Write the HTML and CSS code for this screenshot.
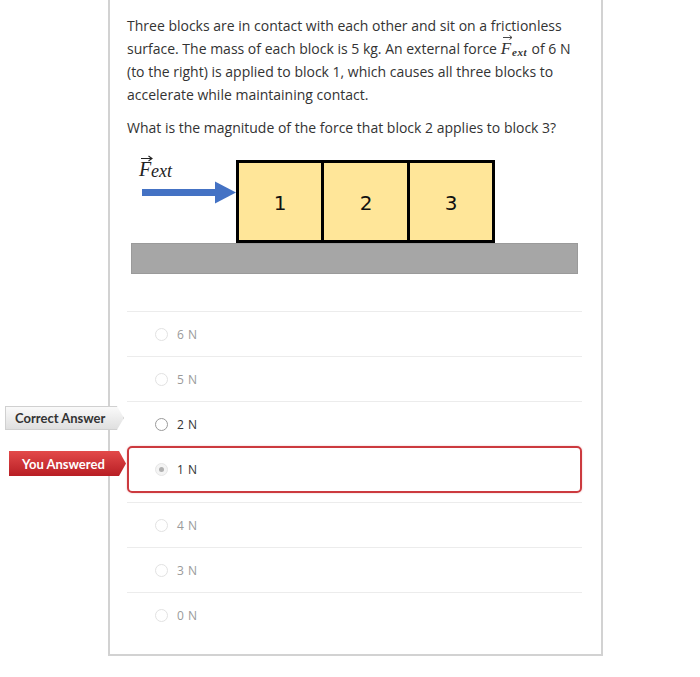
FILE: index.html
```html
<!DOCTYPE html>
<html>
<head>
<meta charset="utf-8">
<link rel="stylesheet" href="styles.css">
</head>
<body>
<div class="card">
  <p class="stem">Three blocks are in contact with each other and sit on a frictionless surface. The mass of each block is 5 kg. An external force <span class="vec"><span class="vf">F<svg class="varrow" width="10" height="5" viewBox="0 0 10 5"><path d="M0 2.5H8.5M6.5 0.5L9 2.5L6.5 4.5" stroke="#333" stroke-width="0.9" fill="none"/></svg></span><sub class="vsub">ext</sub></span> of 6 N (to the right) is applied to block 1, which causes all three blocks to accelerate while maintaining contact.</p>
  <p class="ask">What is the magnitude of the force that block 2 applies to block 3?</p>
  <svg class="diagram" width="452" height="128" viewBox="0 0 452 128">
    <text x="10" y="27" class="fl">F</text>
    <text x="22" y="28" class="fl sub">ext</text>
    <path d="M12 9.5H22M19.5 7L23 9.5L19.5 12" stroke="#222" stroke-width="1.1" fill="none"/>
    <rect x="13" y="40" width="75" height="7" fill="#4472c4"/>
    <polygon points="86,32.5 107,43.5 86,54.5" fill="#4472c4"/>
    <rect x="2.5" y="94.5" width="446" height="30" fill="#a6a6a6" stroke="#9a9a9a" stroke-width="1"/>
    <rect x="108.5" y="12.5" width="85" height="80" fill="#ffe699" stroke="#000" stroke-width="3"/>
    <rect x="193.5" y="12.5" width="86" height="80" fill="#ffe699" stroke="#000" stroke-width="3"/>
    <rect x="279.5" y="12.5" width="85" height="80" fill="#ffe699" stroke="#000" stroke-width="3"/>
    <text x="151" y="61" class="num">1</text>
    <text x="237" y="61" class="num">2</text>
    <text x="322" y="61" class="num">3</text>
  </svg>
  <ul class="options">
    <li class="opt"><span class="radio"></span><span class="lbl">6 N</span></li>
    <li class="opt"><span class="radio"></span><span class="lbl">5 N</span></li>
    <li class="opt correct"><span class="tag tag-correct">Correct Answer</span><span class="radio"></span><span class="lbl">2 N</span></li>
    <li class="opt answered"><span class="tag tag-answered">You Answered</span><span class="radio checked"></span><span class="lbl">1 N</span></li>
    <li class="opt after"><span class="radio"></span><span class="lbl">4 N</span></li>
    <li class="opt"><span class="radio"></span><span class="lbl">3 N</span></li>
    <li class="opt"><span class="radio"></span><span class="lbl">0 N</span></li>
  </ul>
</div>
</body>
</html>
```
FILE: styles.css
```css
html, body {
  margin: 0;
  padding: 0;
  background: #fff;
}
body {
  font-family: "Open Sans", Lato, sans-serif;
  color: #333;
}
.card {
  margin-left: 108px;
  width: 455px;
  padding: 14px 19px 17px 17px;
  border-left: 2px solid #d2d2d2;
  border-right: 2px solid #d2d2d2;
  border-bottom: 2px solid #d2d2d2;
}
.stem, .ask {
  margin: 0;
  font-size: 14px;
  line-height: 23px;
}
.ask {
  margin-top: 10px;
}
.vec {
  font-family: "Liberation Serif", serif;
  font-style: italic;
  font-size: 17px;
}
.vf {
  position: relative;
  display: inline-block;
  padding-right: 1px;
}
.varrow {
  position: absolute;
  left: 2px;
  top: -2px;
}
.vsub {
  font-size: 11px;
  font-weight: 700;
  letter-spacing: 0.5px;
  vertical-align: -2px;
  line-height: 0;
  margin-right: 1px;
}
.diagram {
  display: block;
  margin: 10px 0 0 2px;
}
.fl {
  font-family: "Liberation Serif", serif;
  font-style: italic;
  font-size: 20px;
  fill: #222;
}
.fl.sub {
  font-size: 18px;
}
.num {
  font-family: "DejaVu Sans", sans-serif;
  font-size: 20px;
  text-anchor: middle;
  fill: #111;
}
.options {
  list-style: none;
  margin: 34px 0 0 0;
  padding: 0;
}
.opt {
  position: relative;
  display: flex;
  align-items: center;
  height: 44px;
  border-top: 1px solid #ececec;
  padding-left: 28px;
  font-size: 12px;
  color: #9a9a9a;
}
.radio {
  width: 13px;
  height: 13px;
  border: 1px solid #e2e2e2;
  border-radius: 50%;
  margin-right: 9px;
  box-sizing: border-box;
  display: flex;
  align-items: center;
  justify-content: center;
}
.lbl {
  letter-spacing: 0.5px;
}
.correct {
  color: #333;
}
.correct .radio {
  border-color: #9a9a9a;
}
.answered {
  color: #333;
  height: 43px;
  border: 2px solid #cc3a3f;
  border-radius: 5px;
  padding-left: 26px;
  box-shadow: 0 0 2px rgba(204, 58, 63, 0.35);
}
.answered + .opt {
  margin-top: 9px;
}
.radio.checked {
  border-color: #e6e6e6;
  background: #f4f4f4;
}
.radio.checked::after {
  content: "";
  width: 5px;
  height: 5px;
  border-radius: 50%;
  background: #b0b0b0;
}
.tag {
  position: absolute;
  right: calc(100% + 3px);
  top: 4px;
  height: 24px;
  width: 119px;
  box-sizing: border-box;
  padding-left: 10px;
  display: flex;
  align-items: center;
  font-family: Lato, sans-serif;
  font-size: 13px;
  font-weight: 700;
  clip-path: polygon(0 0, 94% 0, 100% 50%, 94% 100%, 0 100%);
}
.tag-correct {
  color: #333;
  background: linear-gradient(#fbfbfb, #dedede);
  box-shadow: inset 0 0 0 1px #d0d0d0;
}
.tag-answered {
  top: 3px;
  width: 117px;
  height: 25px;
  padding-left: 13px;
  color: #fff;
  background: linear-gradient(#e34a4a, #b81e24);
}
```
